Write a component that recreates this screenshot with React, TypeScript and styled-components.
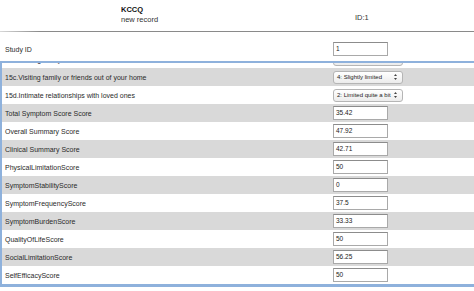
import React from 'react'
import styled, { createGlobalStyle } from 'styled-components'

const GlobalStyle = createGlobalStyle`
  body {
    margin: 0;
    background: #fff;
    font-family: "Liberation Sans Narrow", "Liberation Sans", Arial, sans-serif;
    color: #222;
  }
`

type Field =
  | { label: string; kind: 'select'; value: string }
  | { label: string; kind: 'input'; value: string }

const fields: Field[] = [
  { label: '15b.Visiting family or friends', kind: 'select', value: '3: Moderately' },
  { label: '15c.Visiting family or friends out of your home', kind: 'select', value: '4: Slightly limited' },
  { label: '15d.Intimate relationships with loved ones', kind: 'select', value: '2: Limited quite a bit' },
  { label: 'Total Symptom Score Score', kind: 'input', value: '35.42' },
  { label: 'Overall Summary Score', kind: 'input', value: '47.92' },
  { label: 'Clinical Summary Score', kind: 'input', value: '42.71' },
  { label: 'PhysicalLimitationScore', kind: 'input', value: '50' },
  { label: 'SymptomStabilityScore', kind: 'input', value: '0' },
  { label: 'SymptomFrequencyScore', kind: 'input', value: '37.5' },
  { label: 'SymptomBurdenScore', kind: 'input', value: '33.33' },
  { label: 'QualityOfLifeScore', kind: 'input', value: '50' },
  { label: 'SocialLimitationScore', kind: 'input', value: '56.25' },
  { label: 'SelfEfficacyScore', kind: 'input', value: '50' },
]

const App = () => {
  return (
    <Page>
      <GlobalStyle />
      <Header>
        <Title>
          <strong>KCCQ</strong>
          <span>new record</span>
        </Title>
        <RecordId>ID:1</RecordId>
      </Header>
      <Rule />
      <StudyRow>
        <Label>Study ID</Label>
        <TextBox>1</TextBox>
      </StudyRow>
      <Panel>
        <Scroller>
          {fields.map((f, i) => (
            <Row key={f.label} $shaded={i % 2 === 1}>
              <Label>{f.label}</Label>
              {f.kind === 'select' ? (
                <SelectBox>
                  <span>{f.value}</span>
                  <svg width="5" height="8" viewBox="0 0 5 8">
                    <path d="M2.5 1 L4 3 L1 3 Z M2.5 7 L4 5 L1 5 Z" fill="#444" />
                  </svg>
                </SelectBox>
              ) : (
                <TextBox>{f.value}</TextBox>
              )}
            </Row>
          ))}
        </Scroller>
      </Panel>
    </Page>
  )
}

const Page = styled.div`
  width: 474px;
  height: 291px;
  overflow: hidden;
`

const Header = styled.div`
  display: grid;
  grid-template-columns: 234px 1fr;
  align-items: center;
  height: 31px;
  padding-left: 121px;
`

const Title = styled.div`
  display: flex;
  flex-direction: column;
  font-size: 7.5px;
  line-height: 10px;
  margin-top: -1px;
  strong {
    font-weight: 700;
    color: #111;
  }
  span {
    color: #333;
  }
`

const RecordId = styled.div`
  font-size: 7.5px;
  color: #333;
  margin-top: 4px;
`

const Rule = styled.div`
  height: 1px;
  background: linear-gradient(to right, #d8d8d8 0px, #8a8a8a 40px, #8a8a8a 100%);
`

const StudyRow = styled.div`
  display: grid;
  grid-template-columns: 328px 1fr;
  align-items: center;
  height: 29px;
  padding: 5px 0 0 5px;
  box-sizing: border-box;
`

const Label = styled.div`
  font-size: 7px;
  color: #2a2a2a;
  white-space: nowrap;
`

const Panel = styled.div`
  height: 226px;
  border-top: 2px solid #8eb1dc;
  border-left: 2px solid #8eb1dc;
  border-bottom: 3px solid #8eb1dc;
  box-sizing: border-box;
  overflow: hidden;
`

const Scroller = styled.div`
  margin-top: -13px;
`

const Row = styled.div<{ $shaded: boolean }>`
  display: grid;
  grid-template-columns: 328px 1fr;
  align-items: center;
  height: 18px;
  padding-left: 3px;
  background: ${p => (p.$shaded ? '#d9d9d9' : '#fff')};
`

const TextBox = styled.div`
  width: 55px;
  height: 14px;
  box-sizing: border-box;
  border: 1px solid #a9a9a9;
  border-top-color: #8c8c8c;
  background: #fff;
  font-size: 6.5px;
  line-height: 12px;
  padding-left: 2px;
  color: #222;
`

const SelectBox = styled.div`
  width: 70px;
  height: 13px;
  box-sizing: border-box;
  border: 1px solid #b5b5b5;
  border-radius: 3px;
  background: linear-gradient(#ffffff, #ececec);
  display: flex;
  align-items: center;
  justify-content: space-between;
  padding: 0 4px 0 3px;
  font-size: 6px;
  color: #222;
  white-space: nowrap;
`

export default App
